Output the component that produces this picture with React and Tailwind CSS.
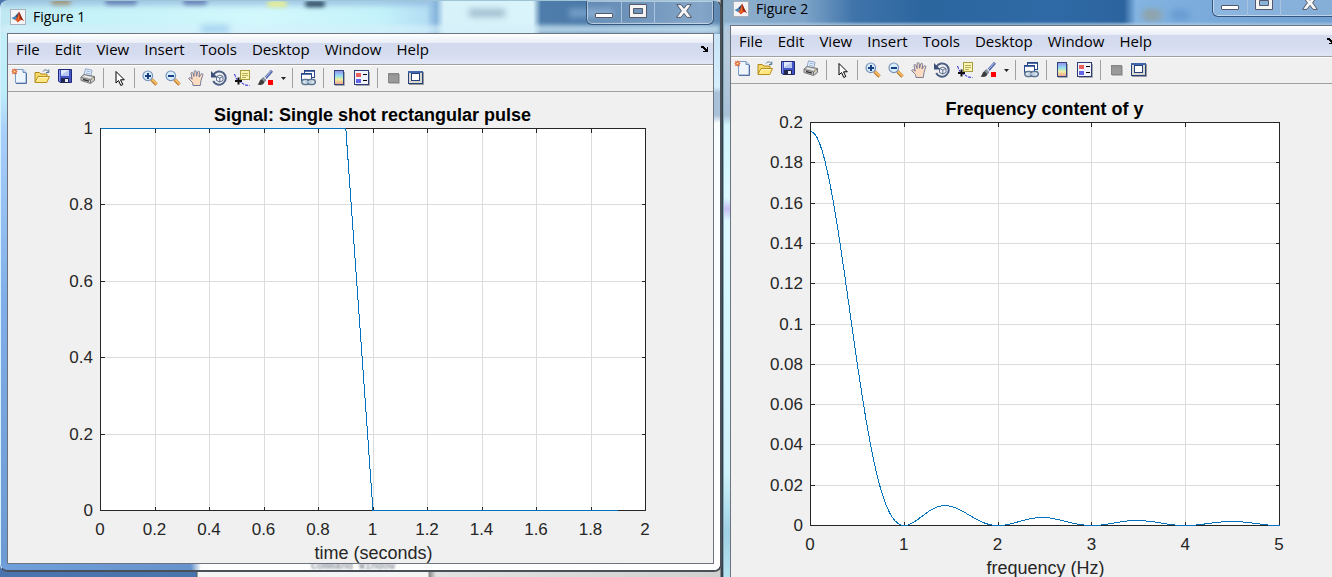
import React from 'react'

const MENUS = ['File', 'Edit', 'View', 'Insert', 'Tools', 'Desktop', 'Window', 'Help']

function MatlabLogo() {
	return (
		<svg viewBox="0 0 16 16" className="h-4 w-4 shrink-0" aria-hidden="true">
			<rect x="0.5" y="0.5" width="15" height="15" fill="#f4f4f6" stroke="#a9b0ba" />
			<path d="M1.5 9 L5 7.3 L7 9.2 L4.8 11z" fill="#3f86b8" />
			<path d="M5 7.3 L9 3 L8.6 8 L7 9.2z" fill="#2d4a78" />
			<path d="M9 2.5 C10 4 11.5 9 14 12 C12.3 10.8 11.2 11 10 11.6 C9 12.2 8.6 13.4 7.6 13.4 C7 12 6 11 4.8 11 C7 9.6 8 6.5 9 2.5z" fill="#d8481c" />
			<path d="M9 2.5 C10 4 11.5 9 14 12 C12 10.6 11 10.6 10 9z" fill="#8c2415" />
			<path d="M8.8 5 C8.6 8 8.2 10 7 12 C8.6 11.5 9.6 9 8.8 5z" fill="#f59a3c" />
		</svg>
	)
}

const ICONS = {
	'New Figure': (
		<>
			<path d="M4.5 1.5H12L15 4.5V15H4.5z" fill="#eef5fd" stroke="#7d9cc8" />
			<path d="M12 1.5V4.5H15" fill="#c5d8ef" stroke="#6f8fbe" />
			<path d="M5 15.5H15.5V5" fill="none" stroke="#52709f" />
			<path d="M1 1L6 6M6 1L1 6M3.5 0.5V6.5M0.5 3.5H6.5" stroke="#ef8a5c" strokeWidth="0.9" />
			<rect x="2" y="2" width="3" height="3" fill="#fff3a8" stroke="#d8481c" />
		</>
	),
	'Open File': (
		<>
			<path d="M9 3.5C10.5 1.3 13 1.3 14.5 4M14.8 1.5V4.5H12" fill="none" stroke="#56759b" />
			<path d="M1 14V4.5H5.5L7 6H13V8" fill="#f4d868" stroke="#b08a20" />
			<path d="M1 14.5L4 8.5H15.5L12.8 14.5z" fill="#ffe680" stroke="#b8901c" />
			<path d="M3 13L4.8 9.5H14" fill="none" stroke="#fff6c4" />
		</>
	),
	'Save Figure': (
		<>
			<path d="M1.5 1.5H14.5V14.5H3L1.5 13z" fill="#4355c4" stroke="#202a78" />
			<path d="M2.5 2V13" stroke="#8a98ea" />
			<rect x="4" y="2" width="8" height="6" fill="#dfe8fa" />
			<path d="M4 7L12 2V8H4z" fill="#b7c6ee" />
			<rect x="4" y="10" width="8" height="5" fill="#20264e" />
			<rect x="8" y="11" width="3" height="3" fill="#e8ecf6" />
		</>
	),
	'Print Figure': (
		<>
			<path d="M4 7L5.5 0.8L12 2.2L10.8 8z" fill="#eaf2fd" stroke="#8fa6c8" />
			<path d="M6.5 3L10.5 4M6 5L10 6" stroke="#93b2de" />
			<path d="M1 9L4 6.5L14.5 8.5V12.5L10.5 15.5L1 12.5z" fill="#c9c9c9" stroke="#777" />
			<path d="M1 9.5L10.5 11.8L14.5 8.7M10.5 12V15" fill="none" stroke="#777" />
			<path d="M3 11.5L9 13.2" stroke="#333" strokeWidth="1.4" />
			<path d="M4 8L11 9.7" stroke="#f6f6f6" />
			<rect x="12" y="10" width="1" height="1" fill="#d8c73c" />
		</>
	),
	'Edit Plot': (
		<path d="M5 1.5V13L7.5 10.5L9.8 15.5L11.8 14.5L9.5 9.8H13.3z" fill="#fff" stroke="#000" />
	),
	'Zoom In': (
		<>
			<path d="M9.5 9.5L14.5 14.5" stroke="#b87830" strokeWidth="3.4" />
			<path d="M10 9.5L14.7 14" stroke="#f6bd62" strokeWidth="1.8" />
			<circle cx="5.8" cy="5.8" r="4.8" fill="#d9eefc" stroke="#7893ba" strokeWidth="1.2" />
			<path d="M3 6H9M6 3V9" stroke="#183f80" strokeWidth="2" />
		</>
	),
	'Zoom Out': (
		<>
			<path d="M9.5 9.5L14.5 14.5" stroke="#b87830" strokeWidth="3.4" />
			<path d="M10 9.5L14.7 14" stroke="#f6bd62" strokeWidth="1.8" />
			<circle cx="5.8" cy="5.8" r="4.8" fill="#d9eefc" stroke="#7893ba" strokeWidth="1.2" />
			<path d="M3 6H9" stroke="#183f80" strokeWidth="2" />
		</>
	),
	Pan: (
		<path
			d="M5 15.5L4.5 12.5L0.8 8.8C0.5 7.6 2 7.2 3 8.2L4.2 9.2L3 3.5C3 2.2 4.5 2.1 5 3.4L6 6.5L6.2 1.5C6.4 0.3 8 0.3 8.2 1.5L8.5 6.2L9.8 1.8C10.3 0.8 11.7 1.1 11.6 2.4L11 7L13.2 4C14 3.2 15.3 3.9 14.8 5L13 10.5L12.3 15.5z"
			fill="#fbdcc0"
			stroke="#6b6f92"
			strokeWidth="0.9"
		/>
	),
	'Rotate 3D': (
		<>
			<path d="M2.4 4.8A6.6 6.6 0 1 1 2.2 11" fill="none" stroke="#4c5f85" strokeWidth="2" />
			<path d="M0 1V7.5H6.5z" fill="#3c4f78" />
			<path d="M5.5 6.5L9 5L12 6.5V10.5L8.8 12L5.5 10.5zM5.5 6.5L8.8 8L12 6.5M8.8 8V12" fill="#eef3fa" stroke="#4c5f85" strokeWidth="0.9" />
		</>
	),
	'Data Cursor': (
		<>
			<path d="M0.5 4L2 8L4 11L8 13L11 15L15.5 15.5" fill="none" stroke="#2222dd" strokeDasharray="3 1" />
			<rect x="6.5" y="0.5" width="9" height="9" fill="#faf6b0" stroke="#a89c42" />
			<path d="M8 3.5H14M8 5.5H14M8 7.5H12" stroke="#b8ad58" />
			<path d="M1 11H8M4.5 7.5V14.5" stroke="#111" strokeWidth="2" />
		</>
	),
	Brush: (
		<>
			<path d="M15 0.8L8.5 8" stroke="#4a5fa5" strokeWidth="2.8" />
			<path d="M14.5 0.8L8 8" stroke="#c9d6f2" strokeWidth="1" />
			<path d="M6 7.5L9 10.3L7.2 12L4.5 9.5z" fill="#8794a5" stroke="#525a66" strokeWidth="0.6" />
			<path d="M4.5 9.2C2 10 3 12.5 0.5 14.5C4 15.5 7 14.5 7.3 12z" fill="#3c3c3c" />
			<rect x="11" y="10" width="5" height="5" fill="#f00" />
		</>
	),
	'Link Plot': (
		<>
			<rect x="4.5" y="0.5" width="10" height="7" fill="#fff" stroke="#27488a" />
			<path d="M4 1H15" stroke="#27488a" strokeWidth="1.6" />
			<rect x="1.5" y="3.5" width="10" height="7" fill="#fff" stroke="#27488a" />
			<path d="M1 4H12" stroke="#27488a" strokeWidth="1.6" />
			<rect x="1.8" y="9.4" width="7.5" height="5" rx="2.5" fill="#dce6ef" stroke="#5c7590" strokeWidth="1.5" />
			<rect x="7.8" y="9.4" width="7.5" height="5" rx="2.5" fill="#dce6ef" stroke="#5c7590" strokeWidth="1.5" />
			<path d="M5 12H12" stroke="#b6c8da" strokeWidth="1.4" />
		</>
	),
	'Insert Colorbar': (
		<>
			<defs>
				<linearGradient id="bar" x1="0" y1="0" x2="0" y2="1">
					<stop offset="0" stopColor="#9a86e8" />
					<stop offset="0.35" stopColor="#8fdcf4" />
					<stop offset="0.65" stopColor="#f0efa0" />
					<stop offset="1" stopColor="#f09a90" />
				</linearGradient>
			</defs>
			<path d="M4 15.5H13.5V2" fill="none" stroke="#aaa" />
			<rect x="3.5" y="0.5" width="9" height="14" fill="url(#bar)" stroke="#2f477e" />
		</>
	),
	'Insert Legend': (
		<>
			<path d="M2 15.5H15.5V2" fill="none" stroke="#aaa" />
			<rect x="0.5" y="0.5" width="14" height="14" fill="#f2f3fc" stroke="#2b3d74" />
			<rect x="2" y="3" width="5" height="4" fill="#e86060" />
			<rect x="2" y="9" width="5" height="4" fill="#6464e8" />
			<path d="M9 4.5H13M9 10.5H13" stroke="#000" />
		</>
	),
	'Hide Plot Tools': (
		<>
			<path d="M4 13.5H14.5V4" fill="none" stroke="#bbb" />
			<rect x="3.5" y="3.5" width="10" height="9" fill="#9a9a9a" stroke="#868686" />
			<path d="M4 5H13" stroke="#8c8c8c" />
		</>
	),
	'Show Plot Tools': (
		<>
			<path d="M1 14.5H15.5V2" fill="none" stroke="#999" />
			<rect x="0.5" y="1.5" width="14" height="12" fill="#d8d8ce" stroke="#27417c" />
			<path d="M0 2H15" stroke="#4166ac" strokeWidth="2" />
			<rect x="3.5" y="3.5" width="8" height="7" fill="#fff" stroke="#27417c" />
		</>
	),
}

const TOOL_GROUPS = [
	['New Figure', 'Open File', 'Save Figure', 'Print Figure'],
	['Edit Plot'],
	['Zoom In', 'Zoom Out', 'Pan', 'Rotate 3D', 'Data Cursor', 'Brush'],
	['Link Plot'],
	['Insert Colorbar', 'Insert Legend'],
	['Hide Plot Tools', 'Show Plot Tools'],
]

function Toolbar() {
	return (
		<div className="flex h-[27px] items-start border-t border-b border-t-white border-b-[#a0a0a0] bg-[#f0f0f0] pt-[2px]">
			{TOOL_GROUPS.map((group, i) => (
				<div key={group[0]} className="flex items-center">
					{i > 0 && <div className="mr-1 ml-[3px] h-5 w-px bg-[#a0a0a0]" />}
					{group.map((name) => (
						<button key={name} type="button" aria-label={name} className="w-[23px] pl-[3px]">
							<svg viewBox="0 0 16 16" className="block h-4 w-4">{ICONS[name]}</svg>
						</button>
					))}
					{group.includes('Brush') && (
						<button type="button" aria-label="Brush options" className="w-3 pl-1">
							<svg viewBox="0 0 5 3" className="block h-[3px] w-[5px]"><path d="M0 0H5L2.5 3z" fill="#222" /></svg>
						</button>
					)}
				</div>
			))}
		</div>
	)
}

function MenuBar() {
	return (
		<nav className="flex h-[31px] items-center justify-between border-b border-[#a0a0a0] bg-[linear-gradient(#ffffff_0px,#e9edf6_9px,#d4daee_9px,#d6dcf0_20px,#e0e5f5_30px)] pr-1 pl-2">
			<div className="flex gap-[15px]">
				{MENUS.map((m) => (
					<button key={m} type="button" className="text-[15px] leading-5 text-black">{m}</button>
				))}
			</div>
			<button type="button" aria-label="Dock figure">
				<svg viewBox="0 0 8 6" className="block h-[6px] w-2" shapeRendering="crispEdges">
					<path d="M0 0H3V1H4V2H5V3H6V1H7V6H2V5H4V4H3V3H2V2H0z" fill="#000" />
				</svg>
			</button>
		</nav>
	)
}

function WindowControls() {
	return (
		<div className="relative flex h-6 w-32 shrink-0 rounded-b-md border border-t-0 border-[#35557c] bg-white/15 shadow-[inset_0_0_0_1px_rgba(255,255,255,0.45)]">
			<button type="button" aria-label="Minimize" className="flex w-[35px] items-center justify-center border-r border-[#a9c3de]">
				<svg viewBox="0 0 18 14" className="h-[14px] w-[18px]">
					<rect x="0.5" y="7.5" width="17" height="4" rx="0.5" fill="#fff" stroke="#54586a" />
				</svg>
			</button>
			<button type="button" aria-label="Maximize" className="flex w-[33px] items-center justify-center border-r border-[#a9c3de] pb-1">
				<svg viewBox="0 0 18 14" className="h-[14px] w-[18px]">
					<path d="M0.5 0.5H17.5V13.5H0.5zM4.5 4.5V9.5H13.5V4.5z" fill="#f4f4f4" fillRule="evenodd" stroke="#54586a" />
				</svg>
			</button>
			<button type="button" aria-label="Close" className="flex flex-1 items-center justify-center pb-1">
				<svg viewBox="0 0 16 14" className="h-[14px] w-4">
					<path d="M0.8 0.6H5L8 4.3L11 0.6H15.2L10.6 6.8L15.4 13.4H11L8 9.4L5 13.4H0.6L5.4 6.8z" fill="#f6f6f6" stroke="#54586a" />
				</svg>
			</button>
		</div>
	)
}

function FigureWindow({ title, className, glass, controls, children }) {
	return (
		<section className={`relative overflow-hidden rounded-lg border border-r-2 border-b-2 px-1.5 pb-1.5 ${className}`}>
			{glass}
			<header className="relative flex h-8 items-start justify-between">
				<div className="flex items-center gap-[7px] pt-2 pl-[3px]">
					<MatlabLogo />
					<h1 className="text-[14px] leading-4 text-black">{title}</h1>
				</div>
				{controls}
			</header>
			<div className="relative border border-[#6d7480] bg-[#f0f0f0]">
				<MenuBar />
				<Toolbar />
				{children}
			</div>
		</section>
	)
}

function Plot({ title, xlabel, width, height, box, xMax, yMax, xTicks, yTicks, points }) {
	const sx = (v) => box.x + (v / xMax) * box.w
	const sy = (v) => box.y + box.h - (v / yMax) * box.h
	const right = box.x + box.w
	const bottom = box.y + box.h
	const path = points.map(([x, y]) => `${sx(x).toFixed(1)},${sy(y).toFixed(1)}`).join(' ')

	return (
		<svg viewBox={`0 0 ${width} ${height}`} className="block w-full font-['Liberation_Sans',Arial,sans-serif]" role="img" aria-label={title}>
			<g transform="translate(0.5 0.5)" shapeRendering="crispEdges" fill="none">
				<rect x={box.x} y={box.y} width={box.w} height={box.h} fill="#fff" />
				{xTicks.map((t) => <path key={t} d={`M${Math.round(sx(t))} ${box.y}V${bottom}`} stroke="#dcdcdc" />)}
				{yTicks.map((t) => <path key={t} d={`M${box.x} ${Math.round(sy(t))}H${right}`} stroke="#dcdcdc" />)}
				{xTicks.map((t) => (
					<path key={t} d={`M${Math.round(sx(t))} ${bottom}v-4M${Math.round(sx(t))} ${box.y}v4`} stroke="#262626" />
				))}
				{yTicks.map((t) => (
					<path key={t} d={`M${box.x} ${Math.round(sy(t))}h4M${right} ${Math.round(sy(t))}h-4`} stroke="#262626" />
				))}
				<rect x={box.x} y={box.y} width={box.w} height={box.h} stroke="#262626" />
				<polyline points={path} stroke="#0072bd" />
			</g>
			<g fill="#262626" fontSize="17">
				{xTicks.map((t) => <text key={t} x={sx(t)} y={bottom + 25} textAnchor="middle">{t}</text>)}
				{yTicks.map((t) => <text key={t} x={box.x - 7} y={Math.round(sy(t)) + 6} textAnchor="end">{t}</text>)}
			</g>
			<text x={box.x + box.w / 2 + 1} y={bottom + 49} textAnchor="middle" fontSize="18" fill="#262626">{xlabel}</text>
			<text x={box.x + box.w / 2} y={box.y - 7} textAnchor="middle" fontSize="18" fontWeight="700" fill="#000">{title}</text>
		</svg>
	)
}

const PULSE = [[0, 1], [0.9, 1], [1, 0], [1.9, 0]]

// power spectrum of ten unit samples taken at 10 Hz
const SPECTRUM = Array.from({ length: 501 }, (_, i) => {
	const f = i / 100
	if (i === 0) return [0, 0.1955]
	const d = Math.sin(Math.PI * f) / (10 * Math.sin((Math.PI * f) / 10))
	return [f, 0.1955 * d * d]
})

function range(n, step) {
	return Array.from({ length: n + 1 }, (_, i) => Number((i * step).toFixed(2)))
}

// blurred shapes seen through the title bar and the frame of the left window
function LeftGlass() {
	return (
		<div aria-hidden="true" className="absolute inset-0">
			<div className="absolute inset-y-0 left-0 w-2 bg-[linear-gradient(#c4eef6_0px,#bdeefa_90px,#a9d0fa_130px,#7faee8_300px,#6c9ad2_560px)]" />
			<div className="absolute inset-y-0 right-0 w-2 bg-[linear-gradient(#5d86b2_0px,#5d86b2_20px,#c9e4f8_34px,#d5effc_86px,#a8c0d8_92px,#a8c0d8_114px,#f8fdfe_122px,#ffffff_100%)]" />
			<div className="absolute inset-x-0 bottom-0 h-2 bg-[linear-gradient(90deg,#6f9fda_0px,#6793cc_190px,#fdfdfd_200px,#ffffff_100%)]" />
			<div className="absolute -bottom-px left-[310px] font-['Liberation_Mono',monospace] text-[10px] leading-2 font-bold text-gray-600 opacity-60 blur-[1px]">Command Window</div>
			<div className="absolute inset-x-0 top-0 h-[33px] bg-[linear-gradient(90deg,#bfe8f2_0px,#c4f2f8_80px,#d2f8fc_260px,#c4f2fa_380px,#b4def4_425px,#86b4dc_435px,#d8f2fa_443px,#daf4fb_532px,#4f7dab_540px,#4a78a8_600px,#6f97c0_700px,#6088b0_100%)]" />
			<div className="absolute inset-x-0 top-6 h-[9px] bg-[#d5effb]/70 blur-[2px]" />
			<div className="absolute -top-1 left-0 h-2 w-[430px] bg-[#86acd8]/70 blur-[3px]" />
			<div className="absolute -top-1 left-[50px] h-2 w-5 rounded-full bg-[#a09a80] blur-[2px]" />
			<div className="absolute -top-1 left-[104px] h-2 w-8 rounded-full bg-[#6c86b8] blur-[2px]" />
			<div className="absolute -top-1 left-[182px] h-2 w-6 rounded-full bg-[#6c86b8] blur-[2px]" />
			<div className="absolute top-0 left-[266px] h-1.5 w-5 rounded-full bg-[#e6ee90] blur-[2px]" />
			<div className="absolute top-0 left-[304px] h-1.5 w-5 rounded-full bg-[#2f4a60] blur-[2px]" />
			<div className="absolute top-6 left-[200px] h-2 w-7 bg-[#93c8ee]/70 blur-[3px]" />
			<div className="absolute top-2 left-[468px] h-2 w-9 bg-[#8aa6bc]/70 blur-[3px]" />
			<div className="absolute top-2 left-[568px] h-2 w-11 bg-[#8db4da]/70 blur-[3px]" />
		</div>
	)
}

function RightGlass() {
	return (
		<div aria-hidden="true" className="absolute inset-0">
			<div className="absolute inset-y-0 left-0 w-2 bg-[linear-gradient(#a9c4dc_0px,#b9cbdc_60px,#a8bfd6_122px,#d2f4fb_132px,#dcfafe_205px,#c8c0f4_216px,#dcfafe_228px,#d0f2fa_480px,#9fd0e4_540px,#c4ecf6_100%)]" />
			<div className="absolute inset-x-0 top-0 h-[33px] bg-[linear-gradient(90deg,#8fb0cc_0px,#7ea4c8_80px,#3f74aa_130px,#2c669f_200px,#2f6aa6_330px,#2c649e_400px,#83b4e2_412px,#78a9da_500px,#6f9fd0_100%)]" />
			<div className="absolute top-4 left-[418px] h-3 w-5 rounded-full bg-[#8fa3a8] blur-[3px]" />
			<div className="absolute top-4 left-[446px] h-3 w-5 rounded-full bg-[#6a9cd2] blur-[3px]" />
			<div className="absolute inset-x-0 top-[30px] h-1 bg-[#a9c8e4]/80 blur-[1px]" />
		</div>
	)
}

export default function App() {
	return (
		<main className="h-screen overflow-hidden bg-[linear-gradient(90deg,#4a74ae_0px,#4a74ae_196px,#555_197px,#f4f4f4_198px,#f4f4f4_428px,#888_429px,#e2e2e2_436px,#d0d0d0_720px,#39414a_721px)] font-['Open_Sans','Noto_Sans',sans-serif]">
			<div className="grid grid-cols-[722fr_609fr] items-start gap-px">
				<FigureWindow
					title="Figure 1"
					className="border-t-[#9fc4d8] border-r-[#4a5058] border-b-[#4a5058] border-l-[#d4f0fa]"
					glass={<LeftGlass />}
					controls={<WindowControls />}
				>
					<Plot
						title="Signal: Single shot rectangular pulse"
						xlabel="time (seconds)"
						width={705}
						height={471}
						box={{ x: 92, y: 36, w: 545, h: 382 }}
						xMax={2}
						yMax={1}
						xTicks={range(10, 0.2)}
						yTicks={range(5, 0.2)}
						points={PULSE}
					/>
				</FigureWindow>

				<FigureWindow
					title="Figure 2"
					className="-mt-2 -mr-4 border-t-[#9fc4d8] border-r-[#4a5058] border-b-[#4a5058] border-l-[#7fa9bc]"
					glass={<RightGlass />}
					controls={<WindowControls />}
				>
					<Plot
						title="Frequency content of y"
						xlabel="frequency (Hz)"
						width={608}
						height={510}
						box={{ x: 79, y: 38, w: 469, h: 403 }}
						xMax={5}
						yMax={0.2}
						xTicks={range(5, 1)}
						yTicks={range(10, 0.02)}
						points={SPECTRUM}
					/>
				</FigureWindow>
			</div>
		</main>
	)
}
